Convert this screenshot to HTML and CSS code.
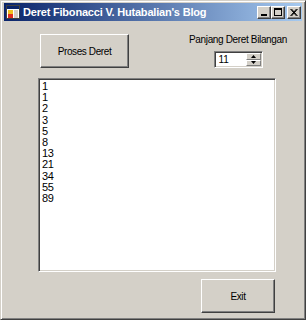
FILE: index.html
```html
<!DOCTYPE html>
<html>
<head>
<meta charset="utf-8">
<link rel="stylesheet" href="styles.css">
</head>
<body>
<div class="window">
  <div class="titlebar">
    <svg class="appicon" width="14" height="14" viewBox="0 0 14 14">
      <rect x="0.5" y="0.5" width="13" height="13" fill="#fff" stroke="#404040"/>
      <rect x="1" y="1" width="12" height="3" fill="#0a246a"/>
      <rect x="2" y="5" width="5" height="4" fill="#f0c020"/>
      <rect x="2" y="9" width="5" height="4" fill="#e03020"/>
      <rect x="8" y="5" width="4" height="8" fill="#d4d0c8"/>
    </svg>
    <span class="title">Deret Fibonacci V. Hutabalian's Blog</span>
    <div class="caps">
      <div class="capbtn">
        <svg width="7" height="7" viewBox="0 0 7 7"><rect x="0" y="5" width="6" height="2" fill="#000"/></svg>
      </div>
      <div class="capbtn">
        <svg width="8" height="8" viewBox="0 0 8 8"><rect x="0.5" y="0.5" width="7" height="7" fill="none" stroke="#000"/><rect x="0" y="0" width="8" height="2" fill="#000"/></svg>
      </div>
      <div class="capbtn close">
        <svg width="8" height="7" viewBox="0 0 8 7"><path d="M0.5 0L6.5 7M1.5 0L7.5 7M6.5 0L0.5 7M7.5 0L1.5 7" stroke="#000" stroke-width="1"/></svg>
      </div>
    </div>
  </div>
  <div class="client">
    <div class="toprow">
      <div class="btn proses">Proses Deret</div>
      <div class="group">
        <div class="label">Panjang Deret Bilangan</div>
        <div class="spinner">
          <div class="spinval">11</div>
          <div class="spinbtns">
            <div class="sbtn"><svg width="5" height="3" viewBox="0 0 5 3"><path d="M2.5 0L5 3H0Z" fill="#000"/></svg></div>
            <div class="sbtn"><svg width="5" height="3" viewBox="0 0 5 3"><path d="M0 0H5L2.5 3Z" fill="#000"/></svg></div>
          </div>
        </div>
      </div>
    </div>
    <div class="listbox">
      <div>1</div><div>1</div><div>2</div><div>3</div><div>5</div><div>8</div><div>13</div><div>21</div><div>34</div><div>55</div><div>89</div>
    </div>
    <div class="bottomrow">
      <div class="btn exit">Exit</div>
    </div>
  </div>
</div>
</body>
</html>
```
FILE: styles.css
```css
html, body {
  margin: 0;
  padding: 0;
  background: #d4d0c8;
}
.window {
  width: 306px;
  height: 320px;
  box-sizing: border-box;
  background: #d4d0c8;
  border-top: 1px solid #d4d0c8;
  border-left: 1px solid #d4d0c8;
  border-right: 1px solid #404040;
  border-bottom: 1px solid #404040;
  box-shadow: inset 1px 1px 0 #fff, inset -1px -1px 0 #808080;
  padding: 2px 3px 3px 3px;
  font-family: "Liberation Sans", Arial, sans-serif;
  display: flex;
  flex-direction: column;
}
.titlebar {
  height: 18px;
  background: linear-gradient(to right, #0a246a, #a6caf0);
  display: flex;
  align-items: center;
  padding-left: 2px;
  padding-right: 1px;
}
.appicon {
  flex: none;
  margin-right: 3px;
}
.title {
  color: #fff;
  font-weight: bold;
  font-size: 11px;
  letter-spacing: -0.2px;
  white-space: nowrap;
  flex: 1;
}
.caps {
  display: flex;
  align-items: center;
}
.capbtn {
  width: 14px;
  height: 13px;
  box-sizing: border-box;
  background: #d4d0c8;
  border-top: 1px solid #fff;
  border-left: 1px solid #fff;
  border-right: 1px solid #404040;
  border-bottom: 1px solid #404040;
  box-shadow: inset -1px -1px 0 #808080;
  display: flex;
  align-items: center;
  justify-content: center;
}
.capbtn.close {
  margin-left: 2px;
}
.client {
  flex: 1;
  display: flex;
  flex-direction: column;
}
.toprow {
  display: flex;
  margin-top: 13px;
  height: 34px;
}
.btn {
  box-sizing: border-box;
  background: #d4d0c8;
  border-top: 1px solid #fff;
  border-left: 1px solid #fff;
  border-right: 1px solid #404040;
  border-bottom: 1px solid #404040;
  box-shadow: inset -1px -1px 0 #808080;
  display: flex;
  align-items: center;
  justify-content: center;
  font-size: 10px;
  letter-spacing: -0.4px;
  color: #000;
}
.proses {
  width: 89px;
  height: 34px;
  margin-left: 36px;
}
.group {
  margin-left: 59px;
  width: 100px;
  display: flex;
  flex-direction: column;
  align-items: center;
}
.label {
  font-size: 10px;
  letter-spacing: -0.35px;
  color: #000;
  line-height: 12px;
  white-space: nowrap;
}
.spinner {
  margin-top: 5px;
  width: 49px;
  height: 17px;
  box-sizing: border-box;
  border-top: 1px solid #808080;
  border-left: 1px solid #808080;
  border-right: 1px solid #fff;
  border-bottom: 1px solid #fff;
  box-shadow: inset 1px 1px 0 #404040, inset -1px -1px 0 #d4d0c8;
  background: #fff;
  display: flex;
  margin-left: 0;
}
.spinval {
  flex: 1;
  font-size: 10px;
  padding-left: 4px;
  line-height: 15px;
}
.spinbtns {
  width: 15px;
  margin: 1px 1px 1px 0;
  display: flex;
  flex-direction: column;
}
.sbtn {
  flex: 1;
  box-sizing: border-box;
  background: #d4d0c8;
  border-top: 1px solid #fff;
  border-left: 1px solid #fff;
  border-right: 1px solid #808080;
  border-bottom: 1px solid #808080;
  display: flex;
  align-items: center;
  justify-content: center;
}
.listbox {
  margin-top: 10px;
  margin-left: 34px;
  width: 238px;
  height: 194px;
  box-sizing: border-box;
  background: #fff;
  border-top: 1px solid #808080;
  border-left: 1px solid #808080;
  border-right: 1px solid #fff;
  border-bottom: 1px solid #fff;
  box-shadow: inset 1px 1px 0 #404040, inset -1px -1px 0 #d4d0c8;
  padding: 2px 0 0 3px;
  font-size: 11px;
  letter-spacing: -0.3px;
  line-height: 11.2px;
  color: #000;
}
.bottomrow {
  display: flex;
  justify-content: flex-end;
  margin-top: 7px;
  padding-right: 27px;
}
.exit {
  width: 74px;
  height: 34px;
}
```
